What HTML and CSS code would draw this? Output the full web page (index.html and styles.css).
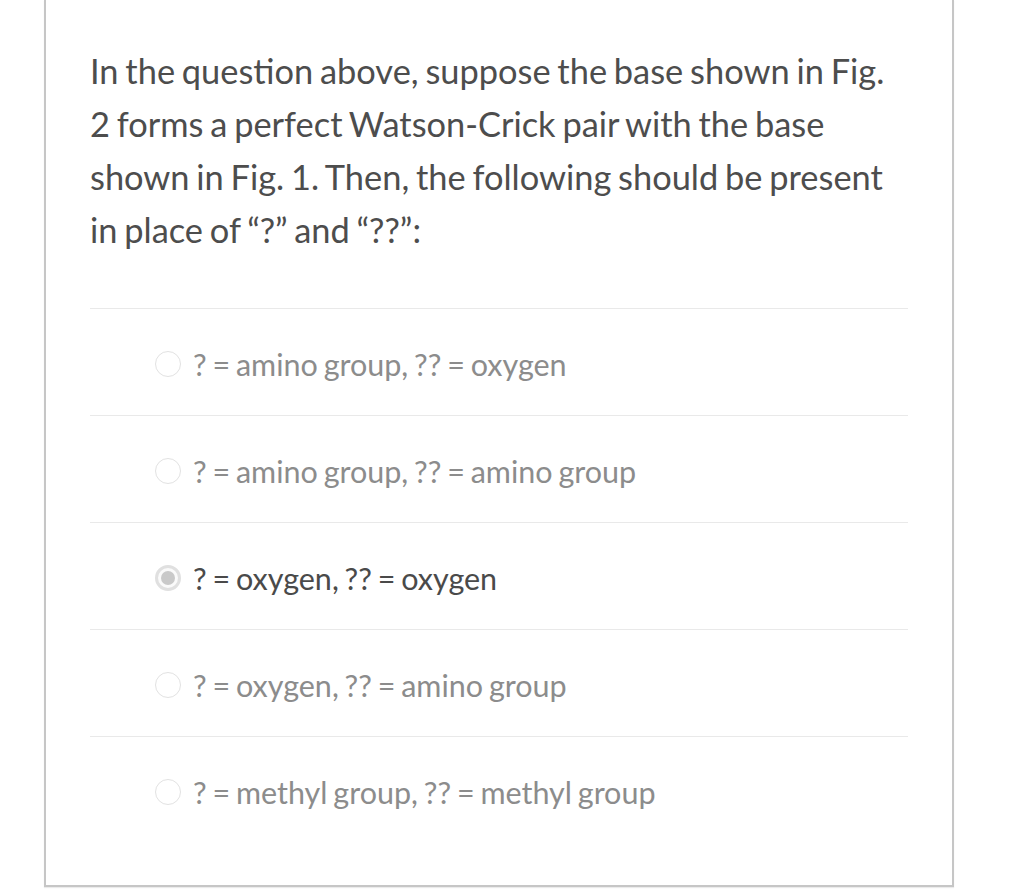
FILE: index.html
```
<!DOCTYPE html>
<html>
<head>
<meta charset="utf-8">
<link rel="stylesheet" href="styles.css">
</head>
<body>
<div class="card">
  <p class="question">In the question above, suppose the base shown in Fig. 2 forms a perfect Watson-Crick pair with the base shown in Fig. 1. Then, the following should be present in place of “?” and “??”:</p>
  <div class="options">
    <div class="option"><span class="radio"></span><span class="label">? = amino group, ?? = oxygen</span></div>
    <div class="option"><span class="radio"></span><span class="label">? = amino group, ?? = amino group</span></div>
    <div class="option selected"><span class="radio"></span><span class="label">? = oxygen, ?? = oxygen</span></div>
    <div class="option"><span class="radio"></span><span class="label">? = oxygen, ?? = amino group</span></div>
    <div class="option"><span class="radio"></span><span class="label">? = methyl group, ?? = methyl group</span></div>
  </div>
</div>
</body>
</html>
```
FILE: styles.css
```
html, body {
  margin: 0;
  padding: 0;
  background: #fff;
}
body {
  font-family: Lato, "Open Sans", sans-serif;
  width: 1024px;
  height: 893px;
  overflow: hidden;
}
.card {
  margin-left: 44px;
  border: 2px solid #c6c6c6;
  border-top: 0;
  box-shadow: 0 1px 1px rgba(0,0,0,0.08);
  padding: 0 44px;
  box-sizing: border-box;
  width: 910px;
  height: 887px;
}
.question {
  margin: 0;
  padding-top: 44px;
  font-size: 34.4px;
  line-height: 53px;
  word-spacing: -2px;
  color: #4d4d4d;
}
.options {
  margin-top: 52px;
}
.option {
  display: flex;
  align-items: center;
  height: 107px;
  box-sizing: border-box;
  border-top: 1px solid #e9e9e9;
  padding-top: 4px;
  padding-left: 65px;
}
.radio {
  width: 26px;
  height: 26px;
  border-radius: 50%;
  border: 1px solid #e2e2e2;
  box-sizing: border-box;
  margin-right: 12px;
  flex: none;
  position: relative;
}
.label {
  font-size: 30.5px;
  word-spacing: -2px;
  color: #8c8c8c;
}
.selected .radio {
  border: 3px solid #e0e0e0;
  background: #fafafa;
}
.selected .radio::after {
  content: "";
  position: absolute;
  left: 3px;
  top: 3px;
  width: 14px;
  height: 14px;
  border-radius: 50%;
  background: #c9c9c9;
}
.selected .label {
  color: #4a4a4a;
}
```
